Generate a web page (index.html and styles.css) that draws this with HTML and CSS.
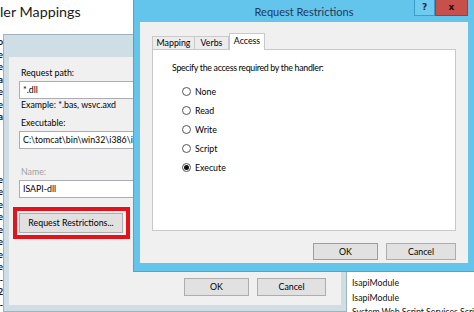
FILE: index.html
```html
<!DOCTYPE html>
<html>
<head>
<meta charset="utf-8">
<link rel="stylesheet" href="styles.css">
</head>
<body>
<div class="bg-title">ler Mappings</div>
<div class="bg-strip">
  <div class="strip-row">o</div>
  <div class="strip-row">e</div>
  <div class="strip-row">e</div>
  <div class="strip-row">a</div>
  <div class="strip-row">e</div>
  <div class="strip-row">e</div>
  <div class="strip-row">a</div>
  <div class="strip-row">&nbsp;</div>
  <div class="strip-row">&nbsp;</div>
  <div class="strip-row">&nbsp;</div>
  <div class="strip-row">&nbsp;</div>
  <div class="strip-row">e</div>
  <div class="strip-row">e</div>
  <div class="strip-row">e</div>
  <div class="strip-row">e</div>
  <div class="strip-row">e</div>
  <div class="strip-row">e</div>
  <div class="strip-row">e</div>
  <div class="strip-row">e</div>
  <div class="strip-row">-</div>
  <div class="strip-row">2</div>
  <div class="strip-row">-</div>
</div>
<ul class="bg-list">
  <li>IsapiModule</li>
  <li>IsapiModule</li>
  <li>System.Web.Script.Services.ScriptHandlerFactory</li>
</ul>

<div class="win win-edit">
  <div class="edit-body">
    <div class="lbl">Request path:</div>
    <div class="tb tb-first">*.dll</div>
    <div class="hint">Example: *.bas, wsvc.axd</div>
    <div class="lbl lbl-exec">Executable:</div>
    <div class="tb">C:\tomcat\bin\win32\i386\isapi_redirect.dll</div>
    <div class="lbl lbl-name">Name:</div>
    <div class="tb">ISAPI-dll</div>
    <div class="hl"><button class="btn btn-rr">Request Restrictions...</button></div>
    <div class="btn-row edit-btns">
      <button class="btn btn-ok">OK</button>
      <button class="btn btn-cancel">Cancel</button>
    </div>
  </div>
</div>

<div class="win win-rr">
  <div class="titlebar">
    <div class="title">Request Restrictions</div>
    <div class="caption">
      <div class="cap cap-help">?</div>
      <div class="cap cap-close">x</div>
    </div>
  </div>
  <div class="rr-body">
    <div class="tabs">
      <div class="tab tab-mapping">Mapping</div>
      <div class="tab tab-verbs">Verbs</div>
      <div class="tab tab-access active">Access</div>
    </div>
    <div class="panel">
      <div class="intro">Specify the access required by the handler:</div>
      <div class="radios">
        <div class="radio"><span class="dot"></span>None</div>
        <div class="radio"><span class="dot"></span>Read</div>
        <div class="radio"><span class="dot"></span>Write</div>
        <div class="radio"><span class="dot"></span>Script</div>
        <div class="radio"><span class="dot checked"></span>Execute</div>
      </div>
    </div>
    <div class="btn-row rr-btns">
      <button class="btn btn-ok default">OK</button>
      <button class="btn btn-cancel2">Cancel</button>
    </div>
  </div>
</div>
</body>
</html>
```

FILE: styles.css
```css
* { box-sizing: border-box; margin: 0; padding: 0; }
html, body { width: 474px; height: 312px; overflow: hidden; }
body {
  position: relative;
  background: #fff;
  font-family: Lato, "Segoe UI", "Liberation Sans", sans-serif;
  font-size: 8.8px;
  color: #000;
}

.bg-title {
  position: absolute;
  left: 0;
  top: 2px;
  font-size: 14.3px;
  line-height: 20px;
  color: #1a1a1a;
}

.bg-strip {
  position: absolute;
  left: 0;
  top: 36px;
  width: 3px;
  height: 276px;
  overflow: hidden;
}
.strip-row {
  display: flex;
  justify-content: flex-end;
  line-height: 12.5px;
  height: 12.5px;
  white-space: nowrap;
  color: #112;
  font-weight: bold;
}

.bg-list {
  position: absolute;
  left: 352px;
  top: 276px;
  list-style: none;
  line-height: 14.5px;
  white-space: nowrap;
  color: #111;
}

.win { position: absolute; }

.win-edit {
  left: 3px;
  top: 34px;
  width: 344px;
  height: 278px;
  background: #cfdde5;
  border: 1px solid #9fb2bd;
  padding: 22px 5px 6px 5px;
}
.edit-body {
  height: 100%;
  background: #f0f0f0;
  padding: 10px 15px 0 10px;
  display: flex;
  flex-direction: column;
  align-items: flex-start;
}
.lbl, .hint { line-height: 12px; padding-left: 2px; }
.tb {
  width: 320px;
  height: 18px;
  margin-top: 2px;
  background: #fff;
  border: 1px solid #abadb3;
  padding: 0 3px;
  line-height: 16px;
  white-space: nowrap;
  overflow: hidden;
}
.lbl-exec { margin-top: 6px; }
.lbl-name { margin-top: 17px; color: #a0a0a0; }

.hl {
  margin-top: 9px;
  margin-left: -6px;
  border: 4px solid #e3131c;
  padding: 2px 3px 2px 2px;
}
.btn {
  font: inherit;
  color: #000;
  background: #e1e1e1;
  border: 1px solid #adadad;
  height: 18px;
  line-height: 16px;
}
.btn-rr { width: 104px; height: 20px; line-height: 18px; }

.btn-row {
  display: flex;
  justify-content: flex-end;
  gap: 8px;
  align-self: stretch;
}
.edit-btns { margin-top: 39px; }
.btn-ok { width: 65px; }
.btn-cancel { width: 69px; }
.btn-cancel2 { width: 70px; height: 17px; line-height: 15px; }
.btn.default { border-color: #7aa7d0; height: 17px; line-height: 15px; }

.win-rr {
  left: 133px;
  top: -1px;
  width: 342px;
  height: 273px;
  background: #63c5ec;
  border: 1px solid #45a8d6;
  padding: 0 6px 8px 6px;
  display: flex;
  flex-direction: column;
}
.titlebar {
  position: relative;
  height: 22px;
  flex: none;
}
.title {
  text-align: center;
  padding-top: 4px;
  font-size: 11px;
  line-height: 16px;
  color: #1d3a5c;
}
.caption {
  position: absolute;
  right: 0;
  top: 0;
  display: flex;
}
.cap {
  height: 16px;
  text-align: center;
  font-family: "DejaVu Sans", sans-serif;
  font-weight: bold;
  font-size: 9px;
  line-height: 14px;
}
.cap-help {
  width: 21px;
  background: #6fcbef;
  border: 1px solid #3d9cc8;
  border-top: none;
  color: #1a2c4a;
}
.cap-close {
  width: 33px;
  background: #c8504a;
  border: 1px solid #a13b36;
  border-top: none;
  color: #2a0c0a;
}

.rr-body {
  flex: 1;
  background: #f0f0f0;
  padding: 11px 12px 3px 12px;
  display: flex;
  flex-direction: column;
}
.tabs {
  display: flex;
  align-items: flex-end;
  height: 16px;
  position: relative;
  z-index: 1;
}
.tab {
  height: 13px;
  line-height: 12px;
  text-align: center;
  background: #ececec;
  border: 1px solid #c9c9c9;
  border-bottom: none;
}
.tab + .tab { border-left: none; }
.tab-mapping { width: 43px; }
.tab-verbs { width: 34px; }
.tab-access { width: 36px; }
.tab.active {
  height: 17px;
  margin-bottom: -1px;
  line-height: 13px;
  background: #fff;
  border-left: 1px solid #c9c9c9;
}
.panel {
  height: 182px;
  flex: none;
  background: #fff;
  border: 1px solid #c9c9c9;
  padding: 12px 19px 0 19px;
}
.intro { line-height: 12px; letter-spacing: -0.3px; }
.radios { margin-top: 7.5px; padding-left: 10px; }
.radio {
  height: 19px;
  display: flex;
  align-items: center;
  gap: 4px;
}
.dot {
  width: 9px;
  height: 9px;
  border-radius: 50%;
  border: 1px solid #555;
  background: #fff;
  display: flex;
  align-items: center;
  justify-content: center;
}
.dot.checked::after {
  content: "";
  width: 5px;
  height: 5px;
  border-radius: 50%;
  background: #111;
}
.rr-btns { margin-top: 12px; }
```
